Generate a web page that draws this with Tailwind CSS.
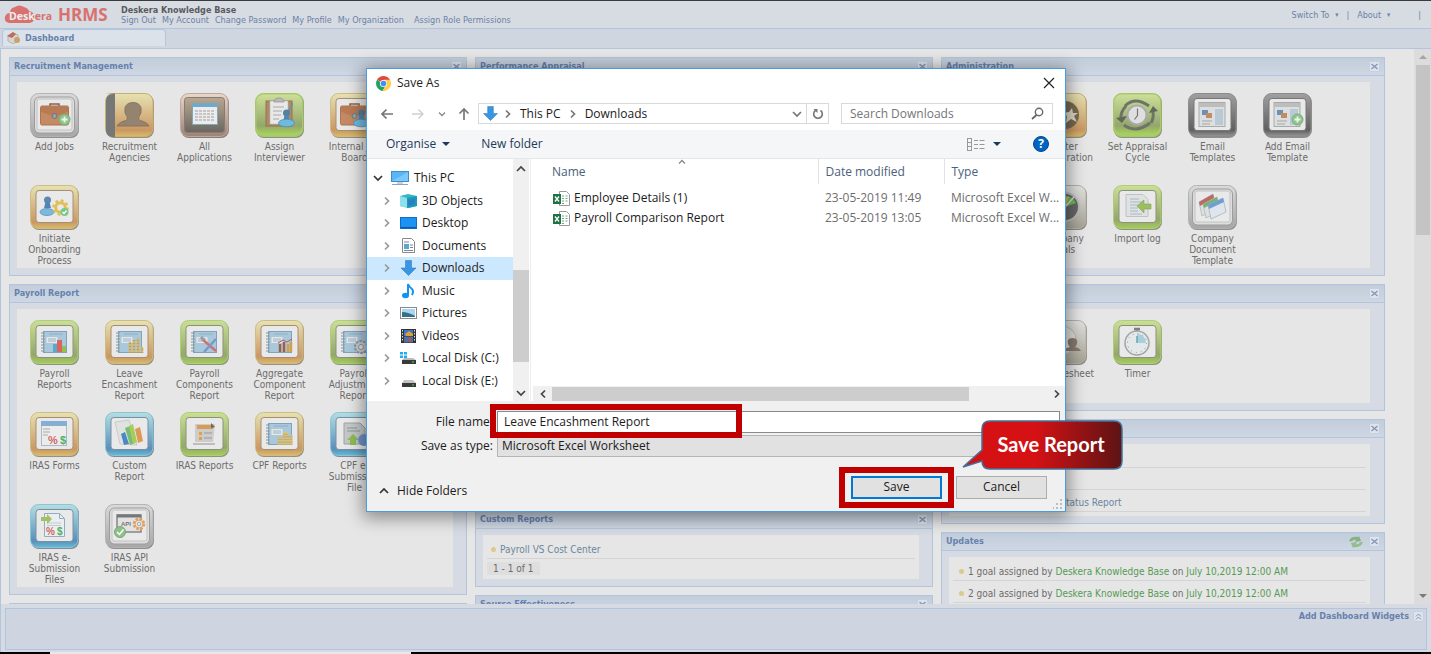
<!doctype html>
<html lang="en">
    <head>
        <meta charset="UTF-8" />
        <title>Deskera HRMS - Dashboard</title>
        <script src="https://cdn.jsdelivr.net/npm/@tailwindcss/browser@4"></script>
    </head>
    <body class="bg-[#e6e6e6]">
        <!-- Shared icon shapes -->
        <svg class="absolute w-0 h-0" aria-hidden="true">
            <defs>
                <linearGradient id="silver" x2="0" y2="1"><stop offset="0" stop-color="#dadada" /><stop offset="1" stop-color="#a6a6a6" /></linearGradient>
                <linearGradient id="gold" x2="0" y2="1"><stop offset="0" stop-color="#e6e2b2" /><stop offset=".85" stop-color="#cb9763" /><stop offset="1" stop-color="#d8bd68" /></linearGradient>
                <linearGradient id="green" x2="0" y2="1"><stop offset="0" stop-color="#cbdf98" /><stop offset=".8" stop-color="#94a76c" /><stop offset="1" stop-color="#a5cd5b" /></linearGradient>
                <linearGradient id="blue" x2="0" y2="1"><stop offset="0" stop-color="#b5dee2" /><stop offset=".85" stop-color="#5a8fbb" /><stop offset="1" stop-color="#66bcd8" /></linearGradient>
                <linearGradient id="dark" x2="0" y2="1"><stop offset="0" stop-color="#a0a0a0" /><stop offset=".85" stop-color="#606060" /><stop offset="1" stop-color="#969696" /></linearGradient>
                <linearGradient id="brown" x2="0" y2="1"><stop offset="0" stop-color="#e8d7cc" /><stop offset="1" stop-color="#9b8378" /></linearGradient>
                <linearGradient id="brownIn" x2="0" y2="1"><stop offset="0" stop-color="#b8a893" /><stop offset="1" stop-color="#6b6660" /></linearGradient>
                <linearGradient id="pale" x2="0" y2="1"><stop offset="0" stop-color="#e2e2e0" /><stop offset="1" stop-color="#a5a292" /></linearGradient>
            </defs>

            <!-- Tiles -->
            <symbol id="tile-silver" viewBox="0 0 49 45">
                <rect x="1" y="1.500" width="48" height="43.500" rx="8" fill="#8f8f8f" />
                <rect x=".5" y=".5" width="47.500" height="43" rx="8" fill="url(#silver)" stroke="#b3b3b3" />
                <rect x="4.500" y="4" width="40" height="36" rx="5" fill="#dedede" stroke="#9c9c9c" />
                <rect x="7" y="6" width="35" height="31" rx="2" fill="#e9e9e9" stroke="#c2c2c2" />
            </symbol>
            <symbol id="tile-gold" viewBox="0 0 49 45">
                <rect x="1" y="1.500" width="48" height="43.500" rx="8" fill="#9a8f7c" />
                <rect x=".5" y=".5" width="47.500" height="43" rx="8" fill="url(#gold)" stroke="#cdbd84" />
                <rect x="6" y="5.500" width="37" height="32" rx="3" fill="#e9e9e9" stroke="#a58f74" />
            </symbol>
            <symbol id="tile-green" viewBox="0 0 49 45">
                <rect x="1" y="1.500" width="48" height="43.500" rx="8" fill="#8b957b" />
                <rect x=".5" y=".5" width="47.500" height="43" rx="8" fill="url(#green)" stroke="#b0cd77" />
                <rect x="6" y="5.500" width="37" height="32" rx="3" fill="#e9e9e9" stroke="#8b9376" />
            </symbol>
            <symbol id="tile-blue" viewBox="0 0 49 45">
                <rect x="1" y="1.500" width="48" height="43.500" rx="8" fill="#7a8c98" />
                <rect x=".5" y=".5" width="47.500" height="43" rx="8" fill="url(#blue)" stroke="#8dc3d2" />
                <rect x="6" y="5.500" width="37" height="32" rx="3" fill="#e9e9e9" stroke="#7592a4" />
            </symbol>
            <symbol id="tile-dark" viewBox="0 0 49 45">
                <rect x="1" y="1.500" width="48" height="43.500" rx="8" fill="#8d8d8d" />
                <rect x=".5" y=".5" width="47.500" height="43" rx="8" fill="url(#dark)" stroke="#8b8b8b" />
                <rect x="6" y="5.500" width="37" height="32" rx="3" fill="#e9e9e9" stroke="#777" />
            </symbol>
            <symbol id="full-green" viewBox="0 0 49 45">
                <rect x="1" y="1.500" width="48" height="43.500" rx="8" fill="#8b957b" />
                <rect x=".5" y=".5" width="47.500" height="43" rx="8" fill="#a7cd66" stroke="#a9c66f" />
                <rect x="1.500" y="1.500" width="45.500" height="39" rx="7" fill="url(#green)" />
            </symbol>
            <symbol id="full-gold" viewBox="0 0 49 45">
                <rect x="1" y="1.500" width="48" height="43.500" rx="8" fill="#9a8f7c" />
                <rect x=".5" y=".5" width="47.500" height="43" rx="8" fill="url(#gold)" stroke="#c9b06d" />
            </symbol>
            <symbol id="full-pale" viewBox="0 0 49 45">
                <rect x="1" y="1.500" width="48" height="43.500" rx="8" fill="#8b8a82" />
                <rect x=".5" y=".5" width="47.500" height="43" rx="8" fill="url(#pale)" stroke="#b4b3aa" />
            </symbol>

            <!-- Glyphs -->
            <symbol id="g-case" viewBox="0 0 49 45">
                <path d="M20 13v-2h9v2" fill="none" stroke="#8a6149" stroke-width="1.500" />
                <rect x="10.500" y="13" width="28" height="19" rx="1.500" fill="#c48a64" stroke="#ab7452" />
                <path d="M11 13.500h27v5q-13 8-27 0z" fill="#b87b55" />
                <circle cx="24.500" cy="23" r="2.500" fill="#92a3ab" stroke="#6a7780" />
            </symbol>
            <symbol id="g-plus" viewBox="0 0 49 45">
                <circle cx="34.500" cy="26.500" r="5.500" fill="#8cc48a" stroke="#7aae78" />
                <path d="M34.500 23.500v6M31.500 26.500h6" stroke="#eef5ee" stroke-width="1.800" />
            </symbol>
            <symbol id="g-person" viewBox="0 0 49 45">
                <path d="M0 .5h10V44H8Q1 44 1 37V8Q1 1 8 1z" fill="#777" />
                <path d="M12 33q2-4 9-5.500 2-1 1-4-3-3-2-9 2-5 8-5t8 5q1 6-2 9-1 3 1 4 7 1.500 9 5.500z" fill="#94846f" stroke="#7d6f5d" stroke-width=".8" />
            </symbol>
            <symbol id="g-table" viewBox="0 0 49 45">
                <rect x="1" y="1.500" width="48" height="43.500" rx="8" fill="#8b7b73" />
                <rect x=".5" y=".5" width="47.500" height="43" rx="8" fill="url(#brown)" stroke="#bfa89c" />
                <rect x="4.500" y="4.500" width="40" height="35" rx="3" fill="url(#brownIn)" stroke="#8b7b6e" />
                <rect x="12.500" y="10.500" width="25" height="21" fill="#ececec" stroke="#79a9bf" />
                <rect x="13" y="11" width="24" height="3" fill="#6fa9cb" />
                <path d="M15 18h20M15 21h20M15 24h20M15 27h20" stroke="#9f9f9f" stroke-dasharray="3 1" />
            </symbol>
            <symbol id="g-clip" viewBox="0 0 49 45">
                <rect x="11" y="8" width="26" height="25" fill="#b08a66" stroke="#967250" />
                <path d="M15 8h18v17l-6 6H15z" fill="#e8e8e8" stroke="#bbb" stroke-width=".6" />
                <path d="M19 9q0-4 5-4t5 4z" fill="#bababa" stroke="#8c8c8c" stroke-width=".7" />
                <path d="M18 14h11M18 18h9M18 22h8M18 26h6" stroke="#a9a9a9" />
                <path d="M38 9l-8 13 1.500 1L38 12z" fill="#6b8fad" />
            </symbol>
            <symbol id="g-user" viewBox="0 0 49 45">
                <circle cx="31.500" cy="20" r="3.500" fill="#557f9f" />
                <path d="M29.500 22h4l1 5h-6z" fill="#4f86ad" />
                <ellipse cx="31.500" cy="30" rx="8" ry="3.800" fill="#6fbbe0" stroke="#4f8eb5" stroke-width=".8" />
            </symbol>
            <symbol id="g-onboard" viewBox="0 0 49 45">
                <circle cx="17.500" cy="15" r="3.500" fill="#5d86b1" />
                <path d="M15.500 17h4l1.500 6h-7z" fill="#5583b0" />
                <ellipse cx="17" cy="27" rx="7" ry="3.500" fill="#79badd" stroke="#5a8fbb" stroke-width=".8" />
                <circle cx="30.500" cy="22.500" r="7" fill="none" stroke="#dfbf58" stroke-width="2.500" stroke-dasharray="2.800 2.700" />
                <circle cx="30.500" cy="22.500" r="4.800" fill="none" stroke="#dfbf58" stroke-width="3" />
                <circle cx="34.500" cy="27" r="4" fill="#77c98a" />
                <path d="M32.500 27l1.500 1.500 2.500-3" fill="none" stroke="#fff" stroke-width="1.200" />
            </symbol>
            <symbol id="g-book" viewBox="0 0 49 45">
                <rect x="13.500" y="11.500" width="23" height="21" fill="#a9c8dc" stroke="#7ea4bd" />
                <rect x="16.500" y="17" width="11" height="6" fill="#e1e7ea" />
                <path d="M18 19h8M18 21h8M19 14h14" stroke="#90a7b6" stroke-width=".8" />
                <path d="M11 13h4M11 16h4M11 19h4M11 22h4M11 25h4M11 28h4M11 31h4" stroke="#8b959b" stroke-width="1.200" />
            </symbol>
            <symbol id="g-bars" viewBox="0 0 49 45">
                <rect x="23" y="24" width="4" height="8" fill="#56aacb" />
                <rect x="27" y="20" width="5" height="12" fill="#d9655e" />
                <rect x="32" y="26" width="4" height="6" fill="#8fc250" />
            </symbol>
            <symbol id="g-coinbars" viewBox="0 0 49 45">
                <path d="M25 33v-11M29 33v-13M33 33v-15M37 33v-6" stroke="#d8b664" stroke-width="2.500" />
                <path d="M25 33v-11M29 33v-13M33 33v-15M37 33v-6" stroke="#a98a48" stroke-width="2.500" stroke-dasharray=".6 2.400" />
            </symbol>
            <symbol id="g-tools" viewBox="0 0 49 45">
                <path d="M22 19l14 12" stroke="#d0716f" stroke-width="2.500" />
                <path d="M36 19L24 32" stroke="#7a9ac5" stroke-width="2.500" />
                <path d="M21 17l3 3" stroke="#9c9c9c" stroke-width="3" />
            </symbol>
            <symbol id="g-agg" viewBox="0 0 49 45">
                <path d="M25 32v-8M29 32v-10" stroke="#9f5f4d" stroke-width="2.500" />
                <path d="M33 32v-8M36 32v-10" stroke="#cfa24a" stroke-width="2.500" />
                <path d="M23 23l5-3 4 2 5-3" fill="none" stroke="#c05050" />
            </symbol>
            <symbol id="g-gear" viewBox="0 0 49 45">
                <circle cx="31" cy="27" r="6" fill="#c9cdd0" stroke="#8d979e" stroke-width="2" stroke-dasharray="2.500 1.200" />
                <circle cx="31" cy="27" r="2.500" fill="#e6e6e6" stroke="#8d979e" />
            </symbol>
            <symbol id="g-coins" viewBox="0 0 49 45">
                <path d="M25 33v-8M30.500 33v-13M35 33v-10" stroke="#d5c184" stroke-width="5" />
                <path d="M25 33v-8M30.500 33v-13M35 33v-10" stroke="#b69f60" stroke-width="5" stroke-dasharray=".6 2" />
            </symbol>
            <symbol id="g-form" viewBox="0 0 49 45">
                <rect x="11.500" y="9.500" width="25" height="24" fill="#ececec" stroke="#a9bac8" />
                <rect x="11" y="9" width="26" height="5" fill="#85aed4" />
                <path d="M13 17h7M13 20h7M13 23h5" stroke="#aaa" />
            </symbol>
            <symbol id="g-chart" viewBox="0 0 49 45">
                <path d="M10 10l14-2 8 25-17-1z" fill="#dfe3df" stroke="#bbb" stroke-width=".6" />
                <path d="M16 22l4-2 4 12-5 1z" fill="#4f86c5" />
                <path d="M20 16l5-2 5 17-5 2z" fill="#78bd72" />
                <path d="M24 14l4-2 4 18-4 2z" fill="#a4cd5d" />
                <path d="M30 17l5-2 3 14-5 2z" fill="#dd9a57" />
            </symbol>
            <symbol id="g-list" viewBox="0 0 49 45">
                <path d="M15 12h20l-2 18H15z" fill="#ccc" />
                <rect x="17" y="13" width="16" height="4" fill="#d79d55" />
                <path d="M31 11l4 4-4 1z" fill="#666" />
                <path d="M19 20h3v3h-3zM19 25h3v3h-3z" fill="#e2a048" />
                <path d="M24 21h8M24 26h8" stroke="#999" />
                <path d="M13 31h22v2H13z" fill="#bdbdbd" />
            </symbol>
            <symbol id="g-upload" viewBox="0 0 49 45">
                <path d="M14 11h16l5 5v16H14z" fill="#c4c8c8" stroke="#9ba3a5" />
                <path d="M17 16h10M17 19h13" stroke="#8f9799" />
                <path d="M23 22l6 6h-3v5h-6v-5h-3z" fill="#8dbb55" />
                <circle cx="34" cy="28" r="6" fill="#6f93c9" />
            </symbol>
            <symbol id="g-efile" viewBox="0 0 49 45">
                <path d="M14.500 9.500h15l5 5v18h-20z" fill="#ebeef0" stroke="#96abc0" />
                <path d="M29.500 9.500v5h5" fill="none" stroke="#96abc0" />
                <path d="M17 19h14M17 21.500h14" stroke="#c3cad0" />
                <path d="M11 13h6v-3l5 5-5 5v-3h-6z" fill="#a3c063" />
            </symbol>
            <symbol id="g-api" viewBox="0 0 49 45">
                <rect x="12" y="11" width="24" height="17" fill="#e2e2e2" stroke="#858585" stroke-width="1.500" />
                <path d="M12 12h24" stroke="#777" stroke-width="3" />
                <circle cx="34" cy="20" r="5" fill="#e6e6e6" stroke="#dfa15d" stroke-width="2.500" stroke-dasharray="2.600 1.300" />
                <circle cx="34" cy="20" r="4" fill="#e6e6e6" stroke="#dfa15d" />
                <circle cx="34" cy="20" r="1.800" fill="none" stroke="#aaa" />
                <circle cx="15" cy="28" r="5.500" fill="#8dc08a" stroke="#79a877" />
                <path d="M12 28l2.500 2.500 4-5" fill="none" stroke="#fff" stroke-width="1.500" />
            </symbol>
            <symbol id="g-cycle" viewBox="0 0 49 45">
                <path d="M12 13q10-10 24 0" fill="none" stroke="#6f7566" stroke-width="3" />
                <path d="M11 32q12 9 26-2" fill="none" stroke="#6f7566" stroke-width="3" />
                <path d="M8 27q-1-8 5-14" fill="none" stroke="#6f7566" stroke-width="3" />
                <path d="M38 30q3-5 2-11" fill="none" stroke="#6f7566" stroke-width="3" />
                <path d="M3 25l11-2-5 7zM36 20l9-2-5-5z" fill="#62675a" />
                <circle cx="24" cy="22" r="9.500" fill="#dfdfdf" stroke="#aaa" stroke-width="2" />
                <path d="M24.500 15.500v7l-3 4" fill="none" stroke="#777" stroke-width="1.200" />
            </symbol>
            <symbol id="g-mail" viewBox="0 0 49 45">
                <rect x="11" y="9.500" width="26" height="24" fill="#dcdfe0" stroke="#a9a9a9" />
                <path d="M11 10h26v4H11z" fill="#bdbdbd" />
                <rect x="14" y="17" width="6" height="5" fill="#6d8fb8" />
                <rect x="18" y="20" width="6" height="5" fill="#c08d63" />
                <rect x="27" y="16" width="8" height="16" fill="#b9cad6" />
                <path d="M14 28h10M14 31h8" stroke="#a5a5a5" />
            </symbol>
            <symbol id="g-import" viewBox="0 0 49 45">
                <path d="M13 9.500h17l5 5v17H13z" fill="#dee2e3" stroke="#bcc3c6" />
                <path d="M17 14h9M17 17h14M17 20h8M17 23h8M17 26h8M17 29h12" stroke="#a8b9c2" />
                <path d="M24 21l7-6v4h7v5h-7v4z" fill="#9cbd63" stroke="#85a54d" stroke-width=".6" />
            </symbol>
            <symbol id="g-docs" viewBox="0 0 49 45">
                <path d="M11 17l14-8 3 14-14 8z" fill="#e0e0e0" stroke="#9aa" stroke-width=".6" />
                <path d="M11 17l14-8 1 4-14 8z" fill="#bf6868" />
                <path d="M15 19l14-7 3 14-14 7z" fill="#e0e0e0" stroke="#9aa" stroke-width=".6" />
                <path d="M15 19l14-7 1 4-14 7z" fill="#77b375" />
                <path d="M20 20l15-7 3 14-15 7z" fill="#dfe5ea" stroke="#8aa5bd" stroke-width=".6" />
                <path d="M20 20l15-7 1 4-15 7z" fill="#6f9fd0" />
            </symbol>
            <symbol id="g-star" viewBox="0 0 49 45">
                <circle cx="27" cy="22" r="14" fill="#776a50" />
                <path d="M34 15l1 5h5l-4 3 3 6-6-3-5 4 1-7-5-3 7-1z" fill="#ddd6c0" />
            </symbol>
            <symbol id="g-gauge" viewBox="0 0 49 45">
                <circle cx="27" cy="22" r="14" fill="#666" stroke="#bbb" stroke-width="2" />
                <path d="M27 22l2-11q6 1 9 7z" fill="#6cba58" />
                <path d="M27 22V11l4 1z" fill="#cdb94d" />
                <path d="M27 22l9-10" stroke="#ddd" stroke-width="1.200" />
            </symbol>
            <symbol id="g-sheet" viewBox="0 0 49 45">
                <circle cx="24" cy="20" r="14" fill="#dcdcdb" stroke="#b8b8b5" />
                <path d="M26 31q1-3 6-4-3-3-2-7 1-2 4.500-2t4.500 2q1 4-2 7 5 1 6 4z" fill="#87796d" />
            </symbol>
            <symbol id="g-timer" viewBox="0 0 49 45">
                <path d="M21 9h6M24 9v4" stroke="#808080" stroke-width="2.500" />
                <circle cx="24" cy="23" r="12" fill="#e4e8e9" stroke="#a0a5a7" stroke-width="1.500" />
                <path d="M24 23v-9q8 0 9 9z" fill="#a6d0de" />
                <path d="M24 23v-7" stroke="#73a3b5" stroke-width="1.500" />
                <circle cx="24" cy="23" r="9.500" fill="none" stroke="#909698" stroke-dasharray="1 4" />
            </symbol>

            <!-- Small interface icons -->
            <symbol id="i-close" viewBox="0 0 11 11">
                <rect x=".5" y=".5" width="10" height="10" rx="1.500" fill="#dde4ec" stroke="#c6d1e0" />
                <path d="M2.500 3l6 5M8.500 3l-6 5" stroke="#8798bb" stroke-width="1.500" />
            </symbol>
            <symbol id="i-right" viewBox="0 0 8 10">
                <path d="M2 1.500L5.500 5 2 8.500" fill="none" stroke="currentColor" stroke-width="1.700" />
            </symbol>
            <symbol id="i-down" viewBox="0 0 10 8">
                <path d="M1 2l4 4 4-4" fill="none" stroke="currentColor" stroke-width="1.700" />
            </symbol>
            <symbol id="i-dl" viewBox="0 0 16 16">
                <path d="M5 .5h6V8h4.500L8 15.500.5 8H5z" fill="#3a96e0" stroke="#2f80c4" stroke-width=".6" />
            </symbol>
            <symbol id="i-xls" viewBox="0 0 17 15">
                <path d="M6.500.5h7l3 3v11h-10z" fill="#fff" stroke="#9a9a9a" />
                <path d="M9 5h2M12.500 5h2M9 7.500h2M12.500 7.500h2M9 10h2M12.500 10h2M9 12.500h2" stroke="#6fa583" />
                <path d="M0 3h8v10H0z" fill="#1f7244" />
                <path d="M2 5.500l4 5M6 5.500l-4 5" stroke="#fff" stroke-width="1.300" />
            </symbol>
        </svg>

        <div class="relative h-screen overflow-hidden flex flex-col border-t border-[#3a3a3e] font-['DejaVu_Sans_Condensed','DejaVu_Sans',sans-serif] text-[10px] leading-[11px] text-[#6c6c6c]">
            <!-- Top bar -->
            <header class="flex items-center h-[27px] shrink-0 px-1 bg-[#d7dbe2]">
                <svg class="w-[51px] h-5 shrink-0" viewBox="0 0 51 20" aria-label="Deskera">
                    <path d="M5 18Q0 17 1 12q1-4 5-4Q6 3 11 2q4-3 9 0 4 1 5 4 5 1 5 5 1 7-5 7z" fill="#d9716f" />
                    <text x="5" y="15" font-family="Open Sans" font-weight="bold" font-size="10.500" fill="#eee">Desk<tspan fill="#d9716f">era</tspan></text>
                </svg>
                <span class="w-[66px] pl-[3px] shrink-0 font-['Open_Sans'] font-bold text-[17px] leading-5 text-[#d9716f]">HRMS</span>
                <div class="flex-1 text-[9px] leading-[10px] text-[#6a83a6]">
                    <h1 class="font-bold text-[#5a5a5e]">Deskera Knowledge Base</h1>
                    <nav class="flex gap-1.5">
                        <a href="#">Sign Out</a>
                        <a href="#">My Account</a>
                        <a href="#">Change Password</a>
                        <a href="#">My Profile</a>
                        <a href="#">My Organization</a>
                        <a href="#" class="pl-1">Assign Role Permissions</a>
                    </nav>
                </div>
                <div class="flex gap-2 pr-1.5 text-[9px] leading-[10px] text-[#6a83a6]">
                    <a href="#" class="flex gap-1.5">Switch To <span class="text-[7px]">▾</span></a>
                    <span>|</span>
                    <a href="#" class="flex gap-1.5">About <span class="text-[7px]">▾</span></a>
                    <span class="pl-5">|</span>
                </div>
            </header>

            <!-- Tabs -->
            <div class="flex h-[21px] shrink-0 border-t border-b border-[#b3c5de] bg-[#cfd6e0] pl-0.5 pb-0.5">
                <a href="#" class="flex items-center gap-1 w-[164px] px-1 rounded-t border border-b-0 border-[#b3c5de] bg-[#dce2ea] font-bold text-[9px] text-[#6681ad]">
                    <svg class="w-[14px] h-3" viewBox="0 0 14 12">
                        <path d="M1 4l5-3 5 2v6l-5 3-5-3z" fill="#d8d4d0" stroke="#999" stroke-width=".6" />
                        <path d="M0 4l6-4 3 2-4 4z" fill="#bf6a5a" />
                        <circle cx="10" cy="8" r="3" fill="#c9a36a" />
                    </svg>
                    Dashboard
                </a>
            </div>

            <!-- Widgets -->
            <div class="flex flex-1 min-h-0 border-l border-[#b3c5de]">
                <main class="grid grid-cols-[458fr_458fr_444fr] gap-x-2 items-start flex-1 pl-2 pr-[29px] pt-2">
                    <div class="flex flex-col gap-2">
                        <section class="border border-[#b3c5de] bg-[#d5dae3]">
                            <div class="flex items-center h-[18px] pl-1 pr-1 border-b border-[#b3c5de] bg-linear-to-b from-[#c2cddb] to-[#ced7e3]">
                                <h2 class="flex-1 font-bold text-[9px] text-[#6681ad]">Recruitment Management</h2>
                                <button aria-label="Close"><svg class="w-[11px] h-[11px]"><use href="#i-close" /></svg></button>
                            </div>
                            <div class="pt-[6px] pb-[7px] pl-[7px] pr-[10px] mr-[3px]">
                                <div class="grid grid-cols-[repeat(auto-fill,75px)] gap-y-[11px] pt-[11px] pb-0.5 bg-[#e6e6e6] text-center">
                                    <a href="#" class="flex flex-col items-center gap-[3px] min-h-[81px]"><svg class="w-[49px] h-[45px]"><use href="#tile-silver" /><use href="#g-case" /><use href="#g-plus" /></svg>Add Jobs</a>
                                    <a href="#" class="flex flex-col items-center gap-[3px] min-h-[81px]"><svg class="w-[49px] h-[45px]"><use href="#full-gold" /><use href="#g-person" /></svg>Recruitment Agencies</a>
                                    <a href="#" class="flex flex-col items-center gap-[3px] min-h-[81px]"><svg class="w-[49px] h-[45px]"><use href="#g-table" /></svg><span>All<br />Applications</span></a>
                                    <a href="#" class="flex flex-col items-center gap-[3px] min-h-[81px]"><svg class="w-[49px] h-[45px]"><use href="#full-green" /><use href="#g-clip" /><use href="#g-user" /></svg><span>Assign<br />Interviewer</span></a>
                                    <a href="#" class="flex flex-col items-center gap-[3px] min-h-[81px]"><svg class="w-[49px] h-[45px]"><use href="#tile-gold" /><use href="#g-case" /><use href="#g-user" /></svg><span>Internal Job<br />Board</span></a>
                                    <a href="#" class="flex flex-col items-center gap-[3px] min-h-[81px] col-start-1"><svg class="w-[49px] h-[45px]"><use href="#tile-gold" /><use href="#g-onboard" /></svg><span>Initiate<br />Onboarding<br />Process</span></a>
                                </div>
                            </div>
                        </section>

                        <section class="border border-[#b3c5de] bg-[#d5dae3]">
                            <div class="flex items-center h-[18px] pl-1 pr-1 border-b border-[#b3c5de] bg-linear-to-b from-[#c2cddb] to-[#ced7e3]">
                                <h2 class="flex-1 font-bold text-[9px] text-[#6681ad]">Payroll Report</h2>
                                <button aria-label="Close"><svg class="w-[11px] h-[11px]"><use href="#i-close" /></svg></button>
                            </div>
                            <div class="pt-[6px] pb-[7px] pl-[7px] pr-[10px] mr-[3px]">
                                <div class="grid grid-cols-[repeat(auto-fill,75px)] gap-y-[11px] pt-[11px] pb-0.5 bg-[#e6e6e6] text-center">
                                    <a href="#" class="flex flex-col items-center gap-[3px] min-h-[81px]"><svg class="w-[49px] h-[45px]"><use href="#tile-green" /><use href="#g-book" /><use href="#g-bars" /></svg><span>Payroll<br />Reports</span></a>
                                    <a href="#" class="flex flex-col items-center gap-[3px] min-h-[81px]"><svg class="w-[49px] h-[45px]"><use href="#tile-gold" /><use href="#g-book" /><use href="#g-coinbars" /></svg><span>Leave<br />Encashment<br />Report</span></a>
                                    <a href="#" class="flex flex-col items-center gap-[3px] min-h-[81px]"><svg class="w-[49px] h-[45px]"><use href="#tile-green" /><use href="#g-book" /><use href="#g-tools" /></svg><span>Payroll<br />Components<br />Report</span></a>
                                    <a href="#" class="flex flex-col items-center gap-[3px] min-h-[81px]"><svg class="w-[49px] h-[45px]"><use href="#tile-gold" /><use href="#g-book" /><use href="#g-agg" /></svg><span>Aggregate<br />Component<br />Report</span></a>
                                    <a href="#" class="flex flex-col items-center gap-[3px] min-h-[81px]"><svg class="w-[49px] h-[45px]"><use href="#tile-green" /><use href="#g-book" /><use href="#g-gear" /></svg><span>Payroll<br />Adjustment<br />Report</span></a>
                                    <a href="#" class="flex flex-col items-center gap-[3px] min-h-[81px] col-start-1"><svg class="w-[49px] h-[45px]"><use href="#tile-gold" /><use href="#g-form" /><text x="18" y="32" font-family="Liberation Sans" font-weight="bold" font-size="11" fill="#cc6666">%<tspan x="30" fill="#4eb060">$</tspan></text></svg>IRAS Forms</a>
                                    <a href="#" class="flex flex-col items-center gap-[3px] min-h-[81px]"><svg class="w-[49px] h-[45px]"><use href="#tile-blue" /><use href="#g-chart" /></svg><span>Custom<br />Report</span></a>
                                    <a href="#" class="flex flex-col items-center gap-[3px] min-h-[81px]"><svg class="w-[49px] h-[45px]"><use href="#tile-green" /><use href="#g-list" /></svg>IRAS Reports</a>
                                    <a href="#" class="flex flex-col items-center gap-[3px] min-h-[81px]"><svg class="w-[49px] h-[45px]"><use href="#tile-gold" /><use href="#g-book" /><use href="#g-coins" /></svg>CPF Reports</a>
                                    <a href="#" class="flex flex-col items-center gap-[3px] min-h-[81px]"><svg class="w-[49px] h-[45px]"><use href="#tile-blue" /><use href="#g-upload" /></svg><span>CPF e-<br />Submission<br />File</span></a>
                                    <a href="#" class="flex flex-col items-center gap-[3px] min-h-[81px] col-start-1"><svg class="w-[49px] h-[45px]"><use href="#tile-blue" /><use href="#g-efile" /><text x="16" y="31" font-family="Liberation Sans" font-weight="bold" font-size="10" fill="#cc6666">%<tspan x="27" fill="#4eb060">$</tspan></text></svg><span>IRAS e-<br />Submission<br />Files</span></a>
                                    <a href="#" class="flex flex-col items-center gap-[3px] min-h-[81px]"><svg class="w-[49px] h-[45px]"><use href="#tile-silver" /><use href="#g-api" /><text x="16" y="22" font-family="Liberation Sans" font-weight="bold" font-size="6" fill="#777">API</text></svg><span>IRAS API<br />Submission</span></a>
                                </div>
                            </div>
                        </section>

                        <section class="border border-[#b3c5de] bg-[#d5dae3] h-5"></section>
                    </div>

                    <div class="flex flex-col gap-2">
                        <section class="border border-[#b3c5de] bg-[#d5dae3]">
                            <div class="flex items-center h-[18px] pl-1 pr-1 border-b border-[#b3c5de] bg-linear-to-b from-[#c2cddb] to-[#ced7e3]">
                                <h2 class="flex-1 font-bold text-[9px] text-[#6681ad]">Performance Appraisal</h2>
                                <button aria-label="Close"><svg class="w-[11px] h-[11px]"><use href="#i-close" /></svg></button>
                            </div>
                            <div class="pt-[6px] pb-[7px] pl-[7px] pr-[10px] mr-[3px]">
                                <div class="min-h-[412px] bg-[#e6e6e6]"></div>
                            </div>
                        </section>

                        <section class="border border-[#b3c5de] bg-[#d5dae3]">
                            <div class="flex items-center h-[18px] pl-1 pr-1 border-b border-[#b3c5de] bg-linear-to-b from-[#c2cddb] to-[#ced7e3]">
                                <h2 class="flex-1 font-bold text-[9px] text-[#6681ad]">Custom Reports</h2>
                                <button aria-label="Close"><svg class="w-[11px] h-[11px]"><use href="#i-close" /></svg></button>
                            </div>
                            <div class="pt-[6px] pb-[7px] pl-[7px] pr-[10px] mr-[3px]">
                                <div class="bg-[#e6e6e6] pt-0.5 px-1 pb-1">
                                    <div class="flex items-center gap-1 h-[22px] px-1 pt-1 border-b border-[#d4d4d4]">
                                        <span class="size-[5px] rounded-full bg-[#dcc98c]"></span>
                                        <a href="#" class="text-[#6b86a0]">Payroll VS Cost Center</a>
                                    </div>
                                    <span class="inline-block mt-[3px] px-1.5 py-px bg-[#dedede]">1 - 1 of 1</span>
                                </div>
                            </div>
                        </section>

                        <section class="border border-[#b3c5de] bg-[#d5dae3]">
                            <div class="flex items-center h-[18px] pl-1 pr-1 border-b border-[#b3c5de] bg-linear-to-b from-[#c2cddb] to-[#ced7e3]">
                                <h2 class="flex-1 font-bold text-[9px] text-[#6681ad]">Source Effectiveness</h2>
                                <button aria-label="Close"><svg class="w-[11px] h-[11px]"><use href="#i-close" /></svg></button>
                            </div>
                        </section>
                    </div>

                    <div class="flex flex-col gap-2">
                        <section class="border border-[#b3c5de] bg-[#d5dae3]">
                            <div class="flex items-center h-[18px] pl-1 pr-1 border-b border-[#b3c5de] bg-linear-to-b from-[#c2cddb] to-[#ced7e3]">
                                <h2 class="flex-1 font-bold text-[9px] text-[#6681ad]">Administration</h2>
                                <button aria-label="Close"><svg class="w-[11px] h-[11px]"><use href="#i-close" /></svg></button>
                            </div>
                            <div class="pt-[6px] pb-[7px] pl-[7px] pr-[11px] mr-[3px]">
                                <div class="grid grid-cols-[repeat(auto-fill,75px)] gap-y-[11px] pt-[11px] pb-0.5 pl-px bg-[#e6e6e6] text-center">
                                    <a href="#" class="flex flex-col items-center gap-[3px] min-h-[81px] col-start-2"><svg class="w-[49px] h-[45px]"><use href="#full-gold" /><use href="#g-star" /></svg><span>Master<br />Configuration</span></a>
                                    <a href="#" class="flex flex-col items-center gap-[3px] min-h-[81px]"><svg class="w-[49px] h-[45px]"><use href="#full-green" /><use href="#g-cycle" /></svg><span>Set Appraisal<br />Cycle</span></a>
                                    <a href="#" class="flex flex-col items-center gap-[3px] min-h-[81px]"><svg class="w-[49px] h-[45px]"><use href="#tile-dark" /><use href="#g-mail" /></svg><span>Email<br />Templates</span></a>
                                    <a href="#" class="flex flex-col items-center gap-[3px] min-h-[81px]"><svg class="w-[49px] h-[45px]"><use href="#tile-dark" /><use href="#g-mail" /><use href="#g-plus" /></svg><span>Add Email<br />Template</span></a>
                                    <a href="#" class="flex flex-col items-center gap-[3px] min-h-[81px] col-start-2"><svg class="w-[49px] h-[45px]"><use href="#full-pale" /><use href="#g-gauge" /></svg><span>Company<br />Goals</span></a>
                                    <a href="#" class="flex flex-col items-center gap-[3px] min-h-[81px]"><svg class="w-[49px] h-[45px]"><use href="#tile-green" /><use href="#g-import" /></svg>Import log</a>
                                    <a href="#" class="flex flex-col items-center gap-[3px] min-h-[81px]"><svg class="w-[49px] h-[45px]"><use href="#tile-silver" /><use href="#g-docs" /></svg><span>Company<br />Document<br />Template</span></a>
                                </div>
                            </div>
                        </section>

                        <section class="border border-[#b3c5de] bg-[#d5dae3]">
                            <div class="flex items-center justify-end h-[18px] pl-1 pr-1 border-b border-[#b3c5de] bg-linear-to-b from-[#c2cddb] to-[#ced7e3]">
                                <button aria-label="Close"><svg class="w-[11px] h-[11px]"><use href="#i-close" /></svg></button>
                            </div>
                            <div class="pt-[6px] pb-[7px] pl-[7px] pr-[11px] mr-[3px]">
                                <div class="grid grid-cols-[repeat(auto-fill,75px)] pt-[11px] pb-0.5 pl-px bg-[#e6e6e6] text-center">
                                    <a href="#" class="flex flex-col items-center gap-[3px] min-h-[81px] col-start-2"><svg class="w-[49px] h-[45px]"><use href="#full-pale" /><use href="#g-sheet" /></svg>My Timesheet</a>
                                    <a href="#" class="flex flex-col items-center gap-[3px] min-h-[81px]"><svg class="w-[49px] h-[45px]"><use href="#tile-green" /><use href="#g-timer" /></svg>Timer</a>
                                </div>
                            </div>
                        </section>

                        <section class="border border-[#b3c5de] bg-[#d5dae3]">
                            <div class="flex items-center justify-end h-[18px] pl-1 pr-1 border-b border-[#b3c5de] bg-linear-to-b from-[#c2cddb] to-[#ced7e3]">
                                <button aria-label="Close"><svg class="w-[11px] h-[11px]"><use href="#i-close" /></svg></button>
                            </div>
                            <div class="pt-[6px] pb-[7px] pl-[7px] pr-[11px] mr-[3px]">
                                <div class="bg-[#e6e6e6] pt-0.5 px-1 pb-1">
                                    <div class="h-[22px] border-b border-[#d4d4d4]"></div>
                                    <div class="h-[22px] border-b border-[#d4d4d4]"></div>
                                    <div class="flex items-center gap-1 h-[22px] px-1.5 pt-1 border-b border-[#d4d4d4]">
                                        <span class="size-[5px] rounded-full bg-[#dcc98c]"></span>
                                        <a href="#" class="text-[#6b86a0]">Employee Appraisal Status Report</a>
                                    </div>
                                </div>
                            </div>
                        </section>

                        <section class="border border-[#b3c5de] bg-[#d5dae3]">
                            <div class="flex items-center gap-1.5 h-[18px] pl-1 pr-1 border-b border-[#b3c5de] bg-linear-to-b from-[#c2cddb] to-[#ced7e3]">
                                <h2 class="flex-1 font-bold text-[9px] text-[#6681ad]">Updates</h2>
                                <button aria-label="Refresh">
                                    <svg class="w-[14px] h-3" viewBox="0 0 14 12">
                                        <path d="M0 5q2-5 9-4l1-1 2 5-6 1 1-2Q4 3 3 5.500z" fill="#86b386" />
                                        <path d="M14 6q-2 6-9 5l-1 1-2-5 6-1-1 2q3 1 4-2z" fill="#93bd8c" />
                                    </svg>
                                </button>
                                <button aria-label="Close"><svg class="w-[11px] h-[11px]"><use href="#i-close" /></svg></button>
                            </div>
                            <div class="pt-[6px] pb-[7px] pl-[7px] pr-[11px] mr-[3px]">
                                <div class="bg-[#e6e6e6] pt-0.5 px-1 pb-1">
                                    <div class="flex items-center gap-1 h-[22px] px-1.5 pt-1 border-b border-[#d4d4d4]">
                                        <span class="size-[5px] rounded-full bg-[#dcc98c]"></span>
                                        <p>1 goal assigned by <a href="#" class="text-[#559b55]">Deskera Knowledge Base</a> on <span class="text-[#559b55]">July 10,2019 12:00 AM</span></p>
                                    </div>
                                    <div class="flex items-center gap-1 h-[22px] px-1.5 pt-1 border-b border-[#d4d4d4]">
                                        <span class="size-[5px] rounded-full bg-[#dcc98c]"></span>
                                        <p>2 goal assigned by <a href="#" class="text-[#559b55]">Deskera Knowledge Base</a> on <span class="text-[#559b55]">July 10,2019 12:00 AM</span></p>
                                    </div>
                                </div>
                            </div>
                        </section>
                    </div>
                </main>

                <!-- Page scrollbar -->
                <div class="flex flex-col items-center w-[17px] bg-[#dcdcdc] py-1.5">
                    <svg class="w-2 h-1 mb-1.5" viewBox="0 0 8 4"><path d="M0 4l4-4 4 4z" fill="#a5a5a5" /></svg>
                    <div class="w-3.5 h-[170px] bg-[#c4c4c4]"></div>
                    <svg class="w-2 h-1 mt-auto" viewBox="0 0 8 4"><path d="M0 0l4 4 4-4z" fill="#7b7b7b" /></svg>
                </div>
            </div>

            <!-- Widget drawer -->
            <footer class="shrink-0 bg-[#d5dae3] border-l border-[#b3c5de] pt-1 px-1 pb-0.5">
                <div class="flex justify-end items-start gap-1 h-[42px] border border-[#b3c5de] bg-[#ced5e0] pt-0.5 pr-0.5 font-bold text-[9px] text-[#6681ad]">
                    Add Dashboard Widgets
                    <button aria-label="Expand">
                        <svg class="w-[11px] h-[11px]" viewBox="0 0 11 11">
                            <rect x=".5" y=".5" width="10" height="10" rx="1.500" fill="#dde4ec" stroke="#c6d1e0" />
                            <path d="M3 5.500l2.500-2.500L8 5.500M3 8.500L5.500 6 8 8.500" fill="none" stroke="#7d93b8" />
                        </svg>
                    </button>
                </div>
            </footer>
            <div class="h-0.5 shrink-0 bg-black pl-[50px]"><div class="w-[361px] h-0.5 bg-[#e8e8e8]"></div></div>

            <!-- Save dialog -->
            <div class="absolute inset-0 flex justify-center items-start pt-[67px] pl-px">
                <div role="dialog" aria-label="Save As" class="relative w-[700px] border border-[#4a9be0] bg-white shadow-[0_3px_16px_3px_rgba(0,0,0,0.4)] font-['Open_Sans',sans-serif] text-[12px] leading-4 text-[#1c1c1c]">
                    <div class="flex items-center gap-1.5 h-7 pl-[9px] pr-2.5">
                        <svg class="size-[15px]" viewBox="0 0 16 16">
                            <path d="M8 8L1.100 4A8 8 0 0 1 14.900 4z" fill="#dd4b3e" />
                            <path d="M8 8h-1L1.100 4A8 8 0 0 0 7 15.900L11 9z" fill="#1da362" />
                            <path d="M8 4h6.900A8 8 0 0 1 7 15.900L11 9z" fill="#ffcd46" />
                            <circle cx="8" cy="8" r="3.800" fill="#fff" />
                            <circle cx="8" cy="8" r="3" fill="#4a8af4" />
                        </svg>
                        <span class="flex-1">Save As</span>
                        <button aria-label="Close dialog">
                            <svg class="size-3" viewBox="0 0 12 12"><path d="M1 1l10 10M11 1L1 11" stroke="#222" stroke-width="1.200" /></svg>
                        </button>
                    </div>

                    <!-- Address row -->
                    <div class="flex items-center h-[33px] pl-3.5 pr-3">
                        <svg class="w-3 h-3 text-[#777]" viewBox="0 0 12 12"><path d="M12 6H1M5.500 1.500L1 6l4.500 4.500" fill="none" stroke="currentColor" stroke-width="1.700" /></svg>
                        <svg class="w-3 h-3 ml-[19px] text-[#d0d0d0]" viewBox="0 0 12 12"><path d="M0 6h11M6.500 1.500L11 6l-4.500 4.500" fill="none" stroke="currentColor" stroke-width="1.500" /></svg>
                        <svg class="w-2 h-1.5 ml-3.5 text-[#888]"><use href="#i-down" /></svg>
                        <svg class="w-3 h-3 ml-3 text-[#777]" viewBox="0 0 12 12"><path d="M6 12V1M1.500 5.500L6 1l4.500 4.500" fill="none" stroke="currentColor" stroke-width="1.700" /></svg>
                        <div class="flex items-center flex-1 h-[21px] ml-2 pl-1 border border-[#d9d9d9]">
                            <svg class="size-[15px]"><use href="#i-dl" /></svg>
                            <svg class="w-2 h-2.5 ml-1.5 text-[#777]"><use href="#i-right" /></svg>
                            <span class="ml-2">This PC</span>
                            <svg class="w-2 h-2.5 mx-2 text-[#777]"><use href="#i-right" /></svg>
                            <span>Downloads</span>
                            <svg class="w-2.5 h-2 ml-auto mr-1 text-[#777]"><use href="#i-down" /></svg>
                            <button aria-label="Refresh folder" class="flex items-center justify-center w-[22px] h-full border-l border-[#d9d9d9]">
                                <svg class="size-3" viewBox="0 0 12 12">
                                    <path d="M8.500 2.500A4.300 4.300 0 1 1 3.500 2.500" fill="none" stroke="#777" stroke-width="1.600" />
                                    <path d="M1.500 1h4v4z" fill="#777" />
                                </svg>
                            </button>
                        </div>
                        <div class="flex items-center w-[212px] h-[21px] ml-3 px-2 border border-[#d9d9d9]">
                            <input type="text" aria-label="Search Downloads" placeholder="Search Downloads" class="flex-1 min-w-0 outline-none placeholder:text-[#767676]" />
                            <svg class="w-[13px] h-[13px]" viewBox="0 0 13 13"><circle cx="8" cy="5" r="3.700" fill="none" stroke="#666" stroke-width="1.400" /><path d="M5.500 8L1 12" stroke="#666" stroke-width="1.800" /></svg>
                        </div>
                    </div>

                    <!-- Toolbar -->
                    <div class="flex items-center h-[29px] pl-[19px] pr-4 border-b border-[#e4e6e9] bg-[#f5f6f7] text-[#1e395b]">
                        <button class="flex items-center gap-1.5">Organise <svg class="w-2 h-1" viewBox="0 0 8 4"><path d="M0 0h8L4 4z" fill="#1e395b" /></svg></button>
                        <button class="ml-[31px]">New folder</button>
                        <svg class="w-[18px] h-[13px] ml-auto" viewBox="0 0 18 13">
                            <rect x=".5" y=".5" width="4" height="12" fill="none" stroke="#999" />
                            <path d="M.5 4.500h4M.5 8.500h4M7 2.500h4M12.500 2.500h5M7 6.500h4M12.500 6.500h5M7 10.500h4M12.500 10.500h5" stroke="#999" />
                        </svg>
                        <svg class="w-2 h-1 ml-2" viewBox="0 0 8 4"><path d="M0 0h8L4 4z" fill="#1e395b" /></svg>
                        <button aria-label="Help" class="ml-8 size-4 rounded-full bg-[#0064c1] border border-[#004a95] text-white font-bold leading-[14px]">?</button>
                    </div>

                    <div class="flex h-[242px]">
                        <!-- Folder tree -->
                        <ul class="grid auto-rows-fr w-[146px] h-[225px] mt-2">
                            <li class="flex items-center pl-1.5">
                                <svg class="w-2.5 h-2 text-[#333]"><use href="#i-down" /></svg>
                                <svg class="w-[18px] h-3.5 ml-2 mr-[5px]" viewBox="0 0 18 14"><rect x=".5" y=".5" width="17" height="10" fill="#59b5f3" stroke="#3d8fcc" /><path d="M1 10L17 1v9z" fill="#7cc8fa" /><path d="M6 12h6M1 13.500h16" stroke="#8fa5b5" /></svg>
                                This PC
                            </li>
                            <li class="flex items-center pl-4">
                                <svg class="w-2 h-2.5 text-[#999]"><use href="#i-right" /></svg>
                                <svg class="w-[17px] h-4 ml-[9px] mr-[5px]" viewBox="0 0 17 16"><path d="M0 3l8-2 9 2v10l-8 2-9-2z" fill="#35b5c9" /><path d="M0 3l7 2v10l-7-2z" fill="#8fe0ea" /><path d="M7 5l10-2v10L7 15z" fill="#1b9ab5" /><path d="M8 7l7-1v5l-7 2z" fill="#2a7fc4" /></svg>
                                3D Objects
                            </li>
                            <li class="flex items-center pl-4">
                                <svg class="w-2 h-2.5 text-[#999]"><use href="#i-right" /></svg>
                                <svg class="w-[17px] h-3 ml-[9px] mr-[5px]" viewBox="0 0 17 12"><rect x=".5" y=".5" width="16" height="11" fill="#1a93f5" stroke="#0d6fc4" /><path d="M1 10.500h15" stroke="#0b5a9f" /></svg>
                                Desktop
                            </li>
                            <li class="flex items-center pl-4">
                                <svg class="w-2 h-2.5 text-[#999]"><use href="#i-right" /></svg>
                                <svg class="w-[17px] h-[15px] ml-[9px] mr-[5px]" viewBox="0 0 17 15"><path d="M2.500.5h9l3 3v11h-12z" fill="#fff" stroke="#888" /><path d="M4 4h5M10 7h3M4 12.500h9M10 9.500h3" stroke="#789" /><rect x="4" y="6" width="5" height="5" fill="#5aa5d6" /></svg>
                                Documents
                            </li>
                            <li class="flex items-center pl-4 bg-[#cce8ff]">
                                <svg class="w-2 h-2.5 text-[#999]"><use href="#i-right" /></svg>
                                <svg class="w-[17px] h-4 ml-[9px] mr-[5px]"><use href="#i-dl" /></svg>
                                Downloads
                            </li>
                            <li class="flex items-center pl-4">
                                <svg class="w-2 h-2.5 text-[#999]"><use href="#i-right" /></svg>
                                <svg class="w-[17px] h-4 ml-[9px] mr-[5px]" viewBox="0 0 17 16"><ellipse cx="5.500" cy="12.500" rx="3.500" ry="2.800" fill="#1493f0" /><path d="M8 13V1q1 3 4 5 2 2 0 6" fill="none" stroke="#1493f0" stroke-width="2" /></svg>
                                Music
                            </li>
                            <li class="flex items-center pl-4">
                                <svg class="w-2 h-2.5 text-[#999]"><use href="#i-right" /></svg>
                                <svg class="w-[17px] h-3 ml-[9px] mr-[5px]" viewBox="0 0 17 12"><rect x=".5" y=".5" width="16" height="11" fill="#fff" stroke="#8a8a8a" /><rect x="2" y="2" width="13" height="8" fill="#a9d4f2" /><path d="M2 5q6 0 13 4v1H2z" fill="#356f86" /></svg>
                                Pictures
                            </li>
                            <li class="flex items-center pl-4">
                                <svg class="w-2 h-2.5 text-[#999]"><use href="#i-right" /></svg>
                                <svg class="w-[17px] h-3.5 ml-[9px] mr-[5px]" viewBox="0 0 17 14"><rect x="1" width="15" height="14" fill="#333" /><path d="M2.500 1v12M14.500 1v12" stroke="#ddd" stroke-dasharray="1.500 1.500" /><rect x="4" y="1" width="9" height="6" fill="#3c73c8" /><rect x="4" y="7.500" width="9" height="6" fill="#4a6fae" /><path d="M5 5l4-3 4 3v2H6z" fill="#d6a136" /><path d="M6 12l4-4 2 4z" fill="#c0503a" /></svg>
                                Videos
                            </li>
                            <li class="flex items-center pl-4">
                                <svg class="w-2 h-2.5 text-[#999]"><use href="#i-right" /></svg>
                                <svg class="w-[17px] h-3 ml-[9px] mr-[5px]" viewBox="0 0 17 12"><path d="M0 0h3v2.500H0zM4 0h3v2.500H4zM0 3.500h3V6H0zM4 3.500h3V6H4z" fill="#1caef0" /><path d="M4 6h9l3 2H2z" fill="#bbb" /><rect x="2" y="8" width="14" height="4" fill="#3a3a3a" /><path d="M12 10h2" stroke="#5fd35f" /></svg>
                                Local Disk (C:)
                            </li>
                            <li class="flex items-center pl-4">
                                <svg class="w-2 h-2.5 text-[#999]"><use href="#i-right" /></svg>
                                <svg class="w-[17px] h-3 ml-[9px] mr-[5px]" viewBox="0 0 17 12"><path d="M4 5h9l3 3H2z" fill="#c4c4c4" /><rect x="2" y="8" width="14" height="4" fill="#3a3a3a" /><path d="M12 10h2" stroke="#5fd35f" /></svg>
                                Local Disk (E:)
                            </li>
                        </ul>
                        <div class="flex flex-col items-center w-4 mr-px bg-[#f0f0f0] pt-1.5 pb-1 text-[#444]">
                            <svg class="w-2.5 h-2 rotate-180"><use href="#i-down" /></svg>
                            <div class="w-4 h-[92px] mt-[97px] bg-[#cdcdcd]"></div>
                            <svg class="w-2.5 h-2 mt-auto"><use href="#i-down" /></svg>
                        </div>

                        <!-- File list -->
                        <div class="relative flex flex-col justify-between flex-1 border-l border-[#ededed]">
                            <svg class="absolute left-[146px] top-0 w-2.5 h-1.5 text-[#888] rotate-180"><use href="#i-down" /></svg>
                            <table class="w-full table-fixed text-left text-[#6d6d6d]">
                                <thead class="text-[#4c607a]">
                                    <tr class="h-[25px]">
                                        <th class="pl-[21px] font-normal border-r border-[#e2e2e2]">Name</th>
                                        <th class="w-[126px] pl-[7px] font-normal border-r border-[#e2e2e2]">Date modified</th>
                                        <th class="w-[121px] pl-[7px] font-normal">Type</th>
                                    </tr>
                                </thead>
                                <tbody>
                                    <tr class="h-1"></tr>
                                    <tr class="h-5">
                                        <td class="pl-[22px] text-[#1c1c1c]"><span class="flex items-center gap-1"><svg class="w-[17px] h-[15px]"><use href="#i-xls" /></svg>Employee Details (1)</span></td>
                                        <td class="pl-[7px]">23-05-2019 11:49</td>
                                        <td class="pl-[7px] whitespace-nowrap">Microsoft Excel W...</td>
                                    </tr>
                                    <tr class="h-5">
                                        <td class="pl-[22px] text-[#1c1c1c]"><span class="flex items-center gap-1"><svg class="w-[17px] h-[15px]"><use href="#i-xls" /></svg>Payroll Comparison Report</span></td>
                                        <td class="pl-[7px]">23-05-2019 13:05</td>
                                        <td class="pl-[7px] whitespace-nowrap">Microsoft Excel W...</td>
                                    </tr>
                                </tbody>
                            </table>
                            <div class="flex items-center h-[15px] ml-0.5 pl-1.5 pr-1 bg-[#f0f0f0] text-[#444]">
                                <svg class="w-2 h-2.5 rotate-180"><use href="#i-right" /></svg>
                                <div class="w-[417px] h-3.5 ml-[5px] bg-[#cdcdcd]"></div>
                                <svg class="w-2 h-2.5 ml-auto"><use href="#i-right" /></svg>
                            </div>
                        </div>
                    </div>

                    <!-- File name, type and buttons -->
                    <div class="bg-[#f0f0f0] pt-2.5 pb-3">
                        <div class="grid grid-cols-[126px_1fr] gap-x-1 gap-y-0.5 items-center pr-[5px]">
                            <label for="fileName" class="text-right">File name:</label>
                            <div class="relative">
                                <input id="fileName" type="text" value="Leave Encashment Report" class="block w-full h-[22px] px-1.5 pb-0.5 border border-[#8a8a8a] bg-white" />
                                <div class="absolute -left-[7px] -top-[7px] w-[252px] h-[34px] border-[6px] border-[#c00000] pointer-events-none"></div>
                            </div>
                            <label for="fileType" class="text-right">Save as type:</label>
                            <select id="fileType" class="block w-full h-[22px] px-1 border border-[#b5b5b5] bg-[#e1e1e1] appearance-none">
                                <option>Microsoft Excel Worksheet</option>
                            </select>
                        </div>
                        <div class="flex items-center mt-[19px] pl-3 pr-[18px]">
                            <button class="flex items-center gap-2 mr-auto pt-1.5"><svg class="w-2.5 h-2 rotate-180 text-[#333]"><use href="#i-down" /></svg>Hide Folders</button>
                            <div class="relative mr-[14px]">
                                <button class="block w-[91px] h-[23px] pb-0.5 border-2 border-[#0078d7] bg-[#e1e1e1]">Save</button>
                                <div class="absolute -inset-x-3 -inset-y-[9px] border-[6px] border-[#c00000] pointer-events-none"></div>
                            </div>
                            <button class="w-[91px] h-[23px] pb-0.5 border border-[#adadad] bg-[#e1e1e1]">Cancel</button>
                        </div>
                    </div>
                    <svg class="absolute right-0.5 bottom-0.5 size-2.5" viewBox="0 0 10 10"><path d="M7 0h2v2H7zM7 4h2v2H7zM7 8h2v2H7zM3 4h2v2H3zM3 8h2v2H3zM0 8h1v2H0z" fill="#bdbdbd" /></svg>

                    <!-- Callout -->
                    <div class="absolute left-[595px] top-[351px] w-[162px] h-[51px]">
                        <svg class="block w-full h-full" viewBox="0 0 162 51">
                            <defs>
                                <linearGradient id="callout"><stop offset="0" stop-color="#d51114" /><stop offset=".45" stop-color="#d51114" /><stop offset="1" stop-color="#5c1414" /></linearGradient>
                            </defs>
                            <path d="M28 1h124q8 0 8 8v32q0 8-8 8H28q-8 0-8-8L1 47l19-17V9q0-8 8-8z" fill="url(#callout)" stroke="#41719c" stroke-width="1.500" />
                        </svg>
                        <span class="absolute inset-0 flex items-center justify-center pl-4 pb-1 font-['Lato',sans-serif] font-bold text-[20px] text-white">Save Report</span>
                    </div>
                </div>
            </div>
        </div>
    </body>
</html>
